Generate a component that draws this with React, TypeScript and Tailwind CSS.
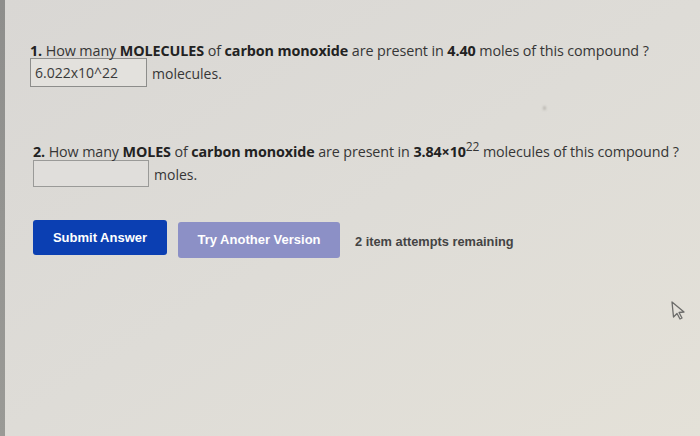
export default function App() {
  return (
    <div className="relative flex h-[436px] w-[700px] overflow-hidden bg-gradient-to-br from-[#d9d7d4] via-[#dedcd7] to-[#e4e1d8] font-['Open_Sans',sans-serif] text-[#363636]">
      <div className="w-[5px] shrink-0 bg-gradient-to-b from-[#8e8e8c] to-[#9a9a96]" />
      <div className="flex flex-1 flex-col pl-[25px] pt-[41px]">
        <div className="relative z-10 text-[14.35px] leading-[20px] tracking-[-0.1px]">
          <b className="text-[#222]">1.</b> How many <b className="text-[#222]">MOLECULES</b> of{" "}
          <b className="text-[#222]">carbon monoxide</b> are present in <b className="text-[#222]">4.40</b> moles of this
          compound ?
        </div>
        <div className="mt-[-3px] flex items-center gap-[5px]">
          <div className="flex h-[29px] w-[117px] items-center border border-[#8d8d8b] bg-[#e3e1dd] px-[4px] text-[14px] text-[#3a3a3a]">
            6.022x10^22
          </div>
          <span className="mt-[2px] text-[14px]">molecules.</span>
        </div>

        <div className="relative z-10 ml-[3px] mt-[55px] text-[14.3px] leading-[20px] tracking-[-0.1px]">
          <b className="text-[#222]">2.</b> How many <b className="text-[#222]">MOLES</b> of{" "}
          <b className="text-[#222]">carbon monoxide</b> are present in{" "}
          <b className="text-[#222]">
            3.84×10<sup className="text-[12px] font-normal text-[#333]">22</sup>
          </b>{" "}
          molecules of this compound ?
        </div>
        <div className="ml-[3px] mt-[-2px] flex items-center gap-[5px]">
          <div className="h-[27px] w-[116px] border border-[#9a9a98] bg-[#e0dedb]" />
          <span className="mt-[2px] text-[14px]">moles.</span>
        </div>

        <div className="ml-[3px] mt-[33px] flex items-start font-['Liberation_Sans',sans-serif] text-[13px] font-bold">
          <div className="flex h-[35px] w-[134px] items-center justify-center rounded-[3px] bg-[#0b3fb2] text-white">
            Submit Answer
          </div>
          <div className="ml-[11px] mt-[2px] flex h-[36px] w-[162px] items-center justify-center rounded-[3px] bg-[#8c90c6] text-white">
            Try Another Version
          </div>
          <span className="ml-[15px] mt-[12px] text-[12.8px] text-[#444]">2 item attempts remaining</span>
        </div>
      </div>

      <div className="absolute left-[543px] top-[106px] h-[4px] w-[3px] rounded-full bg-[#b9b6b0] blur-[1px]" />

      <svg className="absolute left-[669px] top-[300px]" width="18" height="22" viewBox="0 0 18 22">
        <path
          d="M3 2 L4.5 17 L8 13.5 L11 19 L13 18 L10 12.5 L15 12 Z"
          fill="#e4e1da"
          stroke="#6c6c6a"
          strokeWidth="1.3"
          strokeLinejoin="round"
        />
      </svg>
    </div>
  );
}
